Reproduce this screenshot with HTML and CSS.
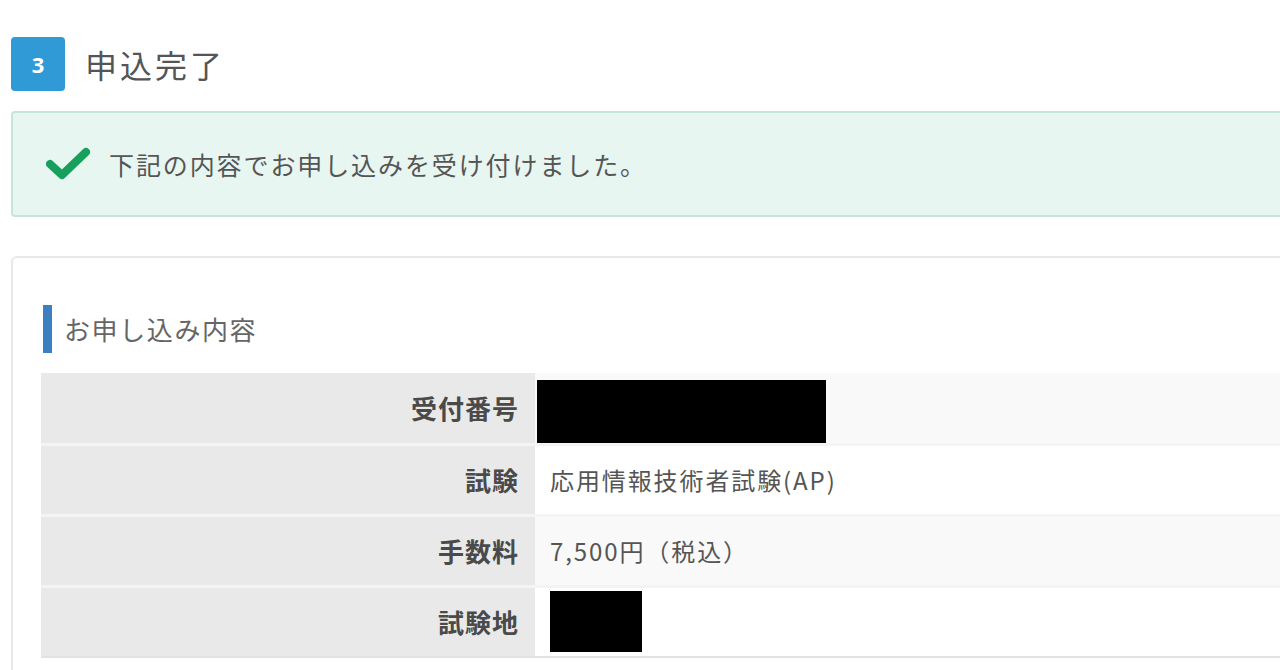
FILE: index.html
```html
<!DOCTYPE html>
<html lang="ja">
  <head>
    <meta charset="utf-8" />
    <meta name="viewport" content="width=device-width, initial-scale=1" />
    <title>申込完了</title>
    <link rel="stylesheet" href="styles.css">
  </head>
  <body>
    <main class="page">
      <h1 class="step-title">
        <span class="step-no">3</span>
        申込完了
      </h1>

      <div class="alert-success">
        <svg class="check" viewBox="0 0 44 34" width="44" height="34" aria-hidden="true">
          <path d="M4 17 L16 28 L40 5" fill="none" stroke="#17a05b" stroke-width="8" stroke-linejoin="round" stroke-linecap="round" />
        </svg>
        <p>下記の内容でお申し込みを受け付けました。</p>
      </div>

      <section class="card">
        <h2 class="section-title">お申し込み内容</h2>
        <table class="detail">
          <tr>
            <th>受付番号</th>
            <td><span class="masked masked-id"></span></td>
          </tr>
          <tr>
            <th>試験</th>
            <td>応用情報技術者試験(AP)</td>
          </tr>
          <tr>
            <th>手数料</th>
            <td>7,500円（税込）</td>
          </tr>
          <tr>
            <th>試験地</th>
            <td><span class="masked masked-place"></span></td>
          </tr>
        </table>
      </section>
    </main>
  </body>
</html>
```

FILE: styles.css
```css
body {
  margin: 0;
  overflow: hidden;
  background: #fff;
  color: #555;
  font-family: "Noto Sans CJK JP", "Noto Sans", sans-serif;
}

* {
  box-sizing: border-box;
}

.page {
  width: 1320px;
  padding: 37px 0 0 11px;
}

.step-title {
  display: flex;
  align-items: center;
  gap: 20px;
  margin: 0;
  font-size: 32px;
  font-weight: normal;
  letter-spacing: 3px;
  color: #555;
}

.step-no {
  display: flex;
  align-items: center;
  justify-content: center;
  width: 54px;
  height: 54px;
  border-radius: 4px;
  background: #2f9ad6;
  color: #fff;
  font-family: "Open Sans", sans-serif;
  font-size: 22px;
  font-weight: bold;
  letter-spacing: 0;
}

.alert-success {
  display: flex;
  align-items: center;
  gap: 19px;
  height: 106px;
  margin-top: 20px;
  padding-left: 33px;
  border: 2px solid #c4e7da;
  border-radius: 4px;
  background: #e8f6f1;
}

.alert-success p {
  margin: 0;
  font-size: 25px;
  letter-spacing: 1.9px;
  color: #555;
}

.card {
  margin-top: 39px;
  padding: 47px 0 0 28px;
  height: 460px;
  border: 2px solid #e8e8e8;
  border-radius: 6px;
}

.section-title {
  margin: 0 0 20px 2px;
  padding-left: 12px;
  border-left: 9px solid #3b7fc0;
  font-size: 26px;
  font-weight: normal;
  letter-spacing: 1.6px;
  line-height: 48px;
  color: #666;
}

.detail {
  width: 100%;
  border-collapse: collapse;
  border-bottom: 2px solid #e2e2e2;
  font-size: 24px;
}

.detail tr + tr {
  border-top: 3px solid #f4f4f4;
}

.detail th {
  width: 494px;
  height: 71px;
  padding: 0 16px 0 0;
  background: #e9e9e9;
  text-align: right;
  font-size: 26px;
  font-weight: bold;
  letter-spacing: 1px;
  color: #4a4a4a;
}

.detail td {
  padding: 0 0 0 15px;
  letter-spacing: 1.9px;
  color: #555;
}

.detail tr:nth-child(odd) td {
  background: #f9f9f9;
}

.detail tr:first-child td {
  padding-left: 2px;
  vertical-align: bottom;
}

.masked {
  display: block;
  background: #000;
}

.masked-id {
  width: 289px;
  height: 63px;
}

.masked-place {
  width: 92px;
  height: 61px;
}
```
